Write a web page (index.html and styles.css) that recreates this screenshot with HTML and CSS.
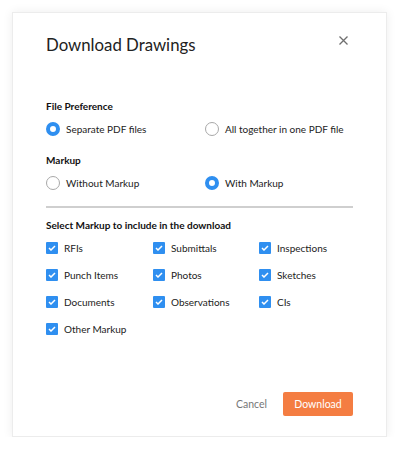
FILE: index.html
```html
<!DOCTYPE html>
<html>
<head>
<meta charset="utf-8">
<link rel="stylesheet" href="styles.css">
</head>
<body>
<div class="card">
  <div class="header">
    <h1 class="title">Download Drawings</h1>
    <svg class="close" width="9" height="9" viewBox="0 0 9 9"><path d="M0.5 0.5L8.5 8.5M8.5 0.5L0.5 8.5" stroke="#6f6f6f" stroke-width="1.3" fill="none"/></svg>
  </div>

  <div class="label first">File Preference</div>
  <div class="radio-row">
    <div class="opt"><span class="radio on"></span>Separate PDF files</div>
    <div class="opt"><span class="radio"></span>All together in one PDF file</div>
  </div>

  <div class="label second">Markup</div>
  <div class="radio-row">
    <div class="opt"><span class="radio"></span>Without Markup</div>
    <div class="opt"><span class="radio on"></span>With Markup</div>
  </div>

  <div class="divider"></div>

  <div class="label third">Select Markup to include in the download</div>
  <div class="grid">
    <div class="opt"><span class="cb"><svg width="8" height="6" viewBox="0 0 8 6"><path d="M1 3L3 5L7 1" stroke="#fff" stroke-width="1.5" fill="none"/></svg></span>RFIs</div>
    <div class="opt"><span class="cb"><svg width="8" height="6" viewBox="0 0 8 6"><path d="M1 3L3 5L7 1" stroke="#fff" stroke-width="1.5" fill="none"/></svg></span>Submittals</div>
    <div class="opt"><span class="cb"><svg width="8" height="6" viewBox="0 0 8 6"><path d="M1 3L3 5L7 1" stroke="#fff" stroke-width="1.5" fill="none"/></svg></span>Inspections</div>
    <div class="opt"><span class="cb"><svg width="8" height="6" viewBox="0 0 8 6"><path d="M1 3L3 5L7 1" stroke="#fff" stroke-width="1.5" fill="none"/></svg></span>Punch Items</div>
    <div class="opt"><span class="cb"><svg width="8" height="6" viewBox="0 0 8 6"><path d="M1 3L3 5L7 1" stroke="#fff" stroke-width="1.5" fill="none"/></svg></span>Photos</div>
    <div class="opt"><span class="cb"><svg width="8" height="6" viewBox="0 0 8 6"><path d="M1 3L3 5L7 1" stroke="#fff" stroke-width="1.5" fill="none"/></svg></span>Sketches</div>
    <div class="opt"><span class="cb"><svg width="8" height="6" viewBox="0 0 8 6"><path d="M1 3L3 5L7 1" stroke="#fff" stroke-width="1.5" fill="none"/></svg></span>Documents</div>
    <div class="opt"><span class="cb"><svg width="8" height="6" viewBox="0 0 8 6"><path d="M1 3L3 5L7 1" stroke="#fff" stroke-width="1.5" fill="none"/></svg></span>Observations</div>
    <div class="opt"><span class="cb"><svg width="8" height="6" viewBox="0 0 8 6"><path d="M1 3L3 5L7 1" stroke="#fff" stroke-width="1.5" fill="none"/></svg></span>CIs</div>
    <div class="opt"><span class="cb"><svg width="8" height="6" viewBox="0 0 8 6"><path d="M1 3L3 5L7 1" stroke="#fff" stroke-width="1.5" fill="none"/></svg></span>Other Markup</div>
  </div>

  <div class="footer">
    <span class="cancel">Cancel</span>
    <span class="btn">Download</span>
  </div>
</div>
</body>
</html>
```

FILE: styles.css
```css
html, body {
  margin: 0;
  padding: 0;
  background: #fff;
}
body {
  font-family: Lato, "Noto Sans", sans-serif;
  color: #222;
}
.card {
  box-sizing: border-box;
  margin: 12px 0 0 12px;
  width: 375px;
  height: 425px;
  border: 1px solid #ececec;
  box-shadow: 0 0 10px rgba(0,0,0,0.07);
  padding: 20px 33px 20px 33px;
  display: flex;
  flex-direction: column;
}
.header {
  display: flex;
  justify-content: space-between;
  align-items: flex-start;
}
.title {
  margin: 0;
  font-size: 16.8px;
  line-height: 24px;
  font-weight: 400;
  color: #222;
}
.close {
  margin-top: 3px;
  margin-right: 5px;
}
.label {
  font-size: 10px;
  font-weight: 700;
  line-height: 16px;
  color: #111;
}
.label.first { margin-top: 41px; }
.label.second { margin-top: 14px; }
.label.third { margin-top: 9px; }
.radio-row {
  margin-top: 6px;
  display: grid;
  grid-template-columns: 159px 1fr;
}
.opt {
  display: flex;
  align-items: center;
  height: 18px;
  font-size: 10px;
  color: #222;
}
.radio {
  box-sizing: border-box;
  width: 14px;
  height: 14px;
  border-radius: 50%;
  border: 1px solid #a8a8a8;
  margin-right: 6px;
  flex: none;
}
.radio.on {
  border: 4px solid #2f8ff0;
  background: #fff;
}
.divider {
  margin-top: 14px;
  height: 2px;
  background: #cfcfcf;
}
.grid {
  margin-top: 6px;
  display: grid;
  grid-template-columns: 107px 106px 1fr;
  row-gap: 9px;
}
.cb {
  width: 12px;
  height: 12px;
  background: #2f8ff0;
  border-radius: 1px;
  margin-right: 6px;
  display: flex;
  align-items: center;
  justify-content: center;
  flex: none;
}
.cb svg { display: block; }
.footer {
  margin-top: auto;
  display: flex;
  justify-content: flex-end;
  align-items: center;
}
.cancel {
  font-size: 10.5px;
  color: #777;
  margin-right: 16px;
}
.btn {
  width: 70px;
  height: 24px;
  box-sizing: border-box;
  background: #f47d42;
  color: #fff;
  font-size: 10.5px;
  border-radius: 2px;
  display: flex;
  align-items: center;
  justify-content: center;
}
```
